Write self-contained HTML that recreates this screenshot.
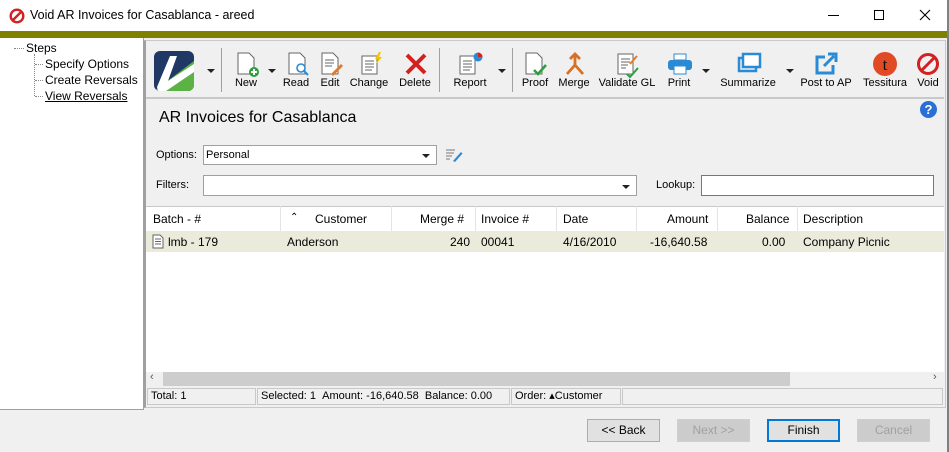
<!DOCTYPE html>
<html><head><style>
*{box-sizing:border-box;margin:0;padding:0}
body{width:949px;height:452px;overflow:hidden;background:#f0f0f0;font-family:"Liberation Sans",sans-serif;font-size:12px;color:#000;position:relative}
.a{position:absolute}
.ic{position:absolute;top:52px}
.lbl{position:absolute;top:77px;font-size:11px;white-space:nowrap;width:70px;margin-left:-35px;text-align:center}
.dd{position:absolute;top:69px;width:0;height:0;border-left:4px solid transparent;border-right:4px solid transparent;border-top:4px solid #222}
.sep{position:absolute;top:48px;width:1px;height:44px;background:#a0a0a0}
.hd{position:absolute;top:212px;font-size:12px;white-space:nowrap}
.cell{position:absolute;top:235px;font-size:12px;white-space:nowrap}
.hsep{position:absolute;top:206px;width:1px;height:25px;background:#e4e4e4}
.btn{position:absolute;top:419px;height:23px;border:1px solid #adadad;background:#e1e1e1;text-align:center;line-height:21px;font-size:12px}
.sb{position:absolute;top:388px;height:17px;border:1px solid #c8c8c8;font-size:11px;line-height:15px;padding-left:3px;white-space:nowrap}
</style></head><body>
<div class="a" style="left:0;top:0;width:949px;height:31px;background:#fff"></div>
<svg class="a" style="left:9px;top:8px" width="16" height="16"><circle cx="8" cy="8" r="6.3" fill="none" stroke="#d42020" stroke-width="2.4"/><line x1="3.5" y1="12.5" x2="12.5" y2="3.5" stroke="#d42020" stroke-width="2.4"/></svg>
<div class="a" style="left:30px;top:8px;font-size:12.5px">Void AR Invoices for Casablanca - areed</div>
<div class="a" style="left:828px;top:15px;width:11px;height:1px;background:#000"></div>
<div class="a" style="left:874px;top:10px;width:10px;height:10px;border:1px solid #000"></div>
<svg class="a" style="left:919px;top:9px" width="12" height="12"><path d="M1 1L11 11M11 1L1 11" stroke="#000" stroke-width="1.1"/></svg>
<div class="a" style="left:0;top:31px;width:949px;height:7px;background:#808000"></div>
<div class="a" style="left:947px;top:0;width:2px;height:452px;background:#808080"></div>
<div class="a" style="left:0;top:38px;width:144px;height:372px;background:#fff;border-right:1px solid #a0a0a0;border-bottom:1px solid #a0a0a0"></div>
<div class="a" style="left:14px;top:48px;width:10px;border-top:1px dotted #888"></div>
<div class="a" style="left:26px;top:41px">Steps</div>
<div class="a" style="left:34px;top:54px;height:42px;border-left:1px dotted #888"></div>
<div class="a" style="left:35px;top:64px;width:8px;border-top:1px dotted #888"></div>
<div class="a" style="left:35px;top:80px;width:8px;border-top:1px dotted #888"></div>
<div class="a" style="left:35px;top:96px;width:8px;border-top:1px dotted #888"></div>
<div class="a" style="left:45px;top:57px">Specify Options</div>
<div class="a" style="left:45px;top:73px">Create Reversals</div>
<div class="a" style="left:45px;top:89px;text-decoration:underline">View Reversals</div>
<div class="a" style="left:144px;top:40px;width:802px;height:368px;border:1px solid #c8c8c8;border-left:2px solid #a0a0a0;background:#f0f0f0"></div>
<div class="a" style="left:146px;top:97px;width:798px;height:2px;background:#c8c8c8"></div>
<div class="a" style="left:154px;top:51px;width:40px;height:40px;border-radius:6px;overflow:hidden;background:#1f3864">
<svg width="40" height="40"><path d="M0 40 L40 10 L40 40Z" fill="#5bb346"/><path d="M3 36 L16 5 L23 5 L14 30 L40 13 L40 21 L12 40 L4 40Z" fill="#fff"/></svg></div>
<div class="dd" style="left:207px"></div>
<div class="sep" style="left:221px"></div>
<svg class="ic" style="left:236px" width="24" height="26"><path d="M2 1H13L18 6V22H2Z" fill="#fff" stroke="#666"/><circle cx="18" cy="20" r="5" fill="#2e9e3e"/><path d="M18 17V23M15 20H21" stroke="#fff" stroke-width="2"/></svg>
<div class="lbl" style="left:246px">New</div>
<div class="dd" style="left:268px"></div>
<svg class="ic" style="left:287px" width="24" height="26"><path d="M2 1H13L18 6V22H2Z" fill="#fff" stroke="#666"/><circle cx="14" cy="16" r="4" fill="none" stroke="#2a8ad4" stroke-width="1.6"/><path d="M17 19L21 23" stroke="#2a8ad4" stroke-width="2"/></svg>
<div class="lbl" style="left:296px">Read</div>
<svg class="ic" style="left:320px" width="24" height="26"><path d="M2 1H13L18 6V22H2Z" fill="#fff" stroke="#666"/><path d="M5 8H14M5 11H14M5 14H12" stroke="#666"/><path d="M11 22L21 12L23 14L13 24Z" fill="#e07b2e"/></svg>
<div class="lbl" style="left:330px">Edit</div>
<svg class="ic" style="left:360px" width="24" height="26"><path d="M2 4H17V22H2Z" fill="#fff" stroke="#666"/><path d="M5 9H14M5 12H14M5 15H14M5 18H12" stroke="#666"/><path d="M19 0L15 7H18L16 12L22 5H19L21 0Z" fill="#f5c400"/></svg>
<div class="lbl" style="left:369px">Change</div>
<svg class="ic" style="left:404px" width="24" height="26"><path d="M3 3L21 21M21 3L3 21" stroke="#d42020" stroke-width="4"/></svg>
<div class="lbl" style="left:415px">Delete</div>
<div class="sep" style="left:439px"></div>
<svg class="ic" style="left:458px" width="26" height="26"><path d="M2 4H17V22H2Z" fill="#fff" stroke="#666"/><path d="M5 9H14M5 12H14M5 15H14M5 18H12" stroke="#666"/><circle cx="20" cy="5" r="4.5" fill="#2a8ad4"/><path d="M20 5V0.5A4.5 4.5 0 0 1 24.5 5Z" fill="#d42020"/></svg>
<div class="lbl" style="left:470px">Report</div>
<div class="dd" style="left:498px"></div>
<div class="sep" style="left:512px"></div>
<svg class="ic" style="left:524px" width="24" height="26"><path d="M2 1H13L18 6V22H2Z" fill="#fff" stroke="#666"/><path d="M10 18L14 22L22 13" stroke="#2e9e3e" stroke-width="2.5" fill="none"/></svg>
<div class="lbl" style="left:535px">Proof</div>
<svg class="ic" style="left:563px" width="24" height="26"><path d="M12 2L12 13L4 22M12 13L20 22M7 7L12 2L17 7" stroke="#d96f25" stroke-width="2.8" fill="none"/></svg>
<div class="lbl" style="left:574px">Merge</div>
<svg class="ic" style="left:616px" width="24" height="26"><path d="M2 2H17V22H2Z" fill="#fff" stroke="#666"/><path d="M5 7H14M5 10H14M5 13H12M5 16H10" stroke="#666"/><path d="M11 22L14 25L22 16" stroke="#2e9e3e" stroke-width="2" fill="none"/><path d="M14 12L21 4" stroke="#e07b2e" stroke-width="2"/></svg>
<div class="lbl" style="left:627px">Validate GL</div>
<svg class="ic" style="left:667px" width="26" height="26"><rect x="7" y="2" width="12" height="6" fill="#fff" stroke="#2a8ad4"/><rect x="1" y="8" width="24" height="10" rx="3" fill="#2a8ad4"/><rect x="7" y="14" width="12" height="8" fill="#fff" stroke="#2a8ad4"/></svg>
<div class="lbl" style="left:679px">Print</div>
<div class="dd" style="left:702px"></div>
<svg class="ic" style="left:737px" width="26" height="26"><rect x="2" y="6" width="17" height="13" fill="none" stroke="#2a8ad4" stroke-width="2.5"/><rect x="6" y="2" width="17" height="13" fill="#fff" stroke="#2a8ad4" stroke-width="2.5"/></svg>
<div class="lbl" style="left:748px">Summarize</div>
<div class="dd" style="left:786px"></div>
<svg class="ic" style="left:814px" width="26" height="26"><path d="M11 5H3V21H19V13" fill="none" stroke="#2a8ad4" stroke-width="3"/><path d="M10 14L20 4M14 2H22V10" stroke="#2a8ad4" stroke-width="3" fill="none"/></svg>
<div class="lbl" style="left:826px">Post to AP</div>
<svg class="ic" style="left:872px" width="26" height="26"><circle cx="13" cy="12" r="12" fill="#e04a24"/><text x="13" y="18" font-family="Liberation Serif,serif" font-size="17" text-anchor="middle" fill="#111">t</text></svg>
<div class="lbl" style="left:885px">Tessitura</div>
<svg class="ic" style="left:916px" width="26" height="26"><circle cx="12" cy="12" r="9.5" fill="none" stroke="#d42020" stroke-width="3"/><line x1="5" y1="19" x2="19" y2="5" stroke="#d42020" stroke-width="3"/></svg>
<div class="lbl" style="left:928px">Void</div>
<div class="a" style="left:920px;top:101px;width:17px;height:17px;border-radius:50%;background:#2a6fd4;color:#fff;font-weight:bold;font-size:13px;text-align:center;line-height:17px">?</div>
<div class="a" style="left:159px;top:109px;font-size:16px">AR Invoices for Casablanca</div>
<div class="a" style="left:156px;top:149px;font-size:11px">Options:</div>
<div class="a" style="left:203px;top:145px;width:234px;height:20px;background:#fff;border:1px solid #a0a0a0;font-size:11px;padding:3px 2px">Personal</div>
<div class="dd" style="left:422px;top:154px"></div>
<svg class="a" style="left:445px;top:148px" width="18" height="14"><path d="M1 2H10M1 5H9M1 8H7M1 11H5" stroke="#777"/><path d="M8 13L16 4L17.5 5.5L10 14Z" fill="#2a8ad4"/></svg>
<div class="a" style="left:156px;top:179px;font-size:11px">Filters:</div>
<div class="a" style="left:203px;top:175px;width:434px;height:21px;background:#fff;border:1px solid #a0a0a0"></div>
<div class="dd" style="left:622px;top:185px"></div>
<div class="a" style="left:656px;top:179px;font-size:11px">Lookup:</div>
<div class="a" style="left:701px;top:175px;width:233px;height:21px;background:#fff;border:1px solid #777"></div>
<div class="a" style="left:146px;top:206px;width:798px;height:166px;background:#fff;border-top:1px solid #c8c8c8"></div>
<div class="hsep" style="left:280px"></div><div class="hsep" style="left:391px"></div><div class="hsep" style="left:475px"></div><div class="hsep" style="left:556px"></div><div class="hsep" style="left:636px"></div><div class="hsep" style="left:717px"></div><div class="hsep" style="left:797px"></div>
<div class="hd" style="left:153px">Batch - #</div>
<div class="hd" style="left:290px;font-size:10px;top:212px">&#8963;</div>
<div class="hd" style="left:315px">Customer</div>
<div class="hd" style="left:420px">Merge #</div>
<div class="hd" style="left:481px">Invoice #</div>
<div class="hd" style="left:563px">Date</div>
<div class="hd" style="left:667px">Amount</div>
<div class="hd" style="left:746px">Balance</div>
<div class="hd" style="left:803px">Description</div>
<div class="a" style="left:146px;top:231px;width:798px;height:21px;background:#ebebdc"></div>
<svg class="a" style="left:152px;top:234px" width="12" height="15"><path d="M1 1H8L11 4V14H1Z" fill="#fff" stroke="#666"/><path d="M3 5H9M3 7.5H9M3 10H9" stroke="#666"/></svg>
<div class="cell" style="left:168px">lmb - 179</div>
<div class="cell" style="left:287px">Anderson</div>
<div class="cell" style="left:450px">240</div>
<div class="cell" style="left:481px">00041</div>
<div class="cell" style="left:563px">4/16/2010</div>
<div class="cell" style="left:650px">-16,640.58</div>
<div class="cell" style="left:762px">0.00</div>
<div class="cell" style="left:803px">Company Picnic</div>
<div class="a" style="left:146px;top:372px;width:798px;height:15px;background:#f0f0f0"></div>
<div class="a" style="left:163px;top:372px;width:627px;height:14px;background:#cdcdcd"></div>
<div class="a" style="left:150px;top:371px;font-size:11px;color:#555">&lsaquo;</div>
<div class="a" style="left:933px;top:371px;font-size:11px;color:#555">&rsaquo;</div>
<div class="sb" style="left:147px;width:109px">Total: 1</div>
<div class="sb" style="left:257px;width:253px">Selected: 1 &nbsp;Amount: -16,640.58 &nbsp;Balance: 0.00</div>
<div class="sb" style="left:511px;width:110px">Order: &#9652;Customer</div>
<div class="sb" style="left:622px;width:321px"></div>
<div class="btn" style="left:587px;width:73px">&lt;&lt; Back</div>
<div class="btn" style="left:677px;width:73px;color:#a0a0a0;border-color:#cfcfcf;background:#ccc">Next &gt;&gt;</div>
<div class="btn" style="left:767px;width:73px;border:2px solid #0078d7;line-height:19px">Finish</div>
<div class="btn" style="left:857px;width:73px;color:#a0a0a0;border-color:#cfcfcf;background:#ccc">Cancel</div>
</body></html>
